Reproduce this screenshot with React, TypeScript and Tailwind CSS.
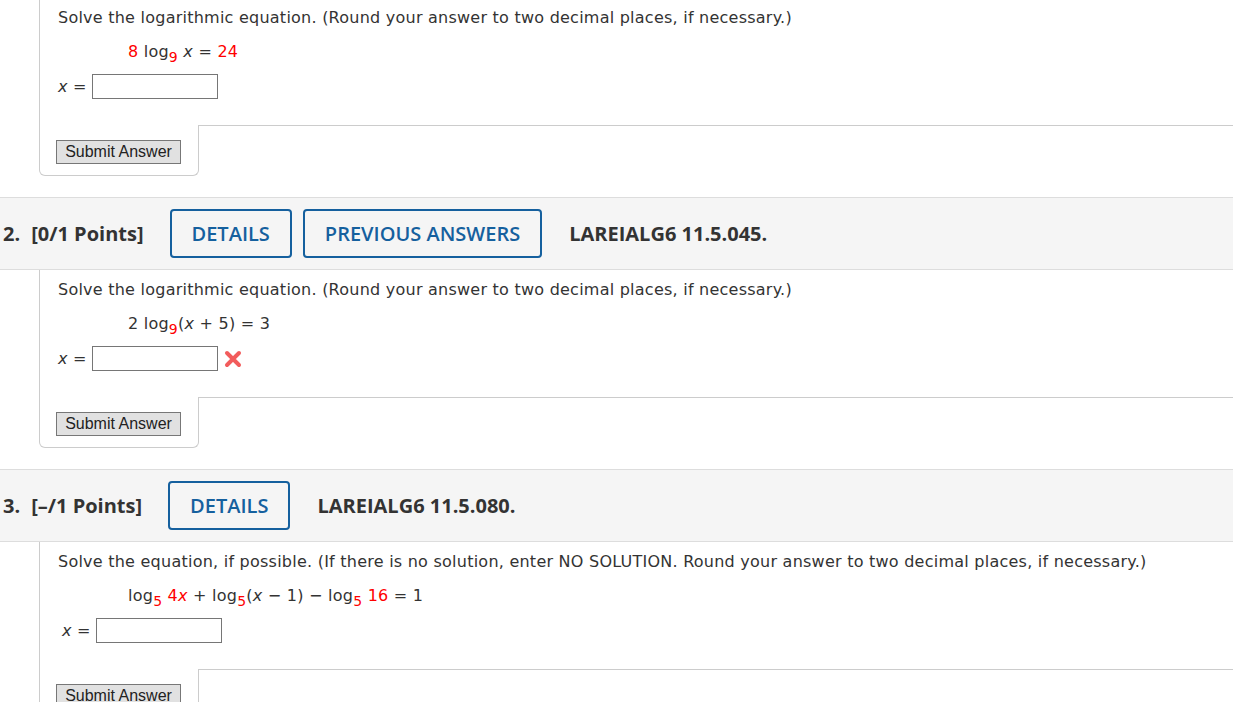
import type { ReactNode } from "react";

const RED = "text-[#f00]";

/** Red subscript base for log */
function Base({ n }: { n: string }) {
  return <span className={`${RED} align-[-5px] text-[14px] leading-none`}>{n}</span>;
}

function X() {
  return <span className="italic">x</span>;
}

function WrongMark() {
  return (
    <svg width="18" height="18" viewBox="0 0 18 18" className="ml-[6px]" aria-hidden="true">
      <path d="M3 3 L15 15 M15 3 L3 15" stroke="#f25c5c" strokeWidth="4" strokeLinecap="round" />
    </svg>
  );
}

function Equation({ children }: { children: ReactNode }) {
  return <p className="mt-[14px] h-[20px] pl-[70px]">{children}</p>;
}

function AnswerRow({ wrong, shifted }: { wrong?: boolean; shifted?: boolean }) {
  return (
    <div className={`mt-[12px] flex h-[25px] items-center ${shifted ? "pl-[4px]" : ""}`}>
      <span className="mr-[5px]">
        <X /> =
      </span>
      <input className="h-[25px] w-[126px] border border-[#767676] bg-white px-1 outline-none" />
      {wrong && <WrongMark />}
    </div>
  );
}

function Question({ first, children }: { first?: boolean; children: ReactNode }) {
  return (
    <div className="ml-[39px]">
      <div
        className={`border-l border-[#ccc] pl-[18px] ${first ? "pt-[8px]" : "pt-[10px]"} pb-[26px] font-['DejaVu_Sans',sans-serif] text-[16px] leading-[20px] tracking-[0.24px] whitespace-nowrap text-[#333]`}
      >
        {children}
      </div>
      <div className="flex">
        <div className="w-[160px] rounded-b-[6px] border-x border-b border-[#ccc] pt-[15px] pb-[11px] pl-[16px]">
          <button className="block h-[24px] w-[125px] border border-[#777] bg-[#e1e1e1] font-['Liberation_Sans',Arial,sans-serif] text-[16px] leading-none text-[#222]">
            Submit Answer
          </button>
        </div>
        <div className="flex-1 border-t border-[#ccc]" />
      </div>
    </div>
  );
}

function Header({ num, points, prev, code }: { num: number; points: string; prev?: boolean; code: string }) {
  const btn =
    "h-[49px] rounded-[4px] border-2 border-[#15609e] px-[20px] font-semibold text-[#15609e]";
  return (
    <div className="mt-[21px] flex h-[73px] items-center border-y border-[#ddd] bg-[#f5f5f5] pl-[3px] font-['Open_Sans',sans-serif] text-[20px] font-bold text-[#333]">
      <span>{num}.</span>
      <span className="ml-[11px]">[{points} Points]</span>
      <button className={`ml-[26px] ${btn}`}>DETAILS</button>
      {prev && <button className={`ml-[11px] ${btn}`}>PREVIOUS ANSWERS</button>}
      <span className="ml-[27px]">{code}</span>
    </div>
  );
}

export default function App() {
  return (
    <div className="h-[702px] w-[1233px] overflow-hidden bg-white">
      <Question first>
        <p>Solve the logarithmic equation. (Round your answer to two decimal places, if necessary.)</p>
        <Equation>
          <span className={RED}>8</span> log<Base n="9" /> <X /> = <span className={RED}>24</span>
        </Equation>
        <AnswerRow />
      </Question>

      <Header num={2} points="0/1" prev code="LAREIALG6 11.5.045." />

      <Question>
        <p>Solve the logarithmic equation. (Round your answer to two decimal places, if necessary.)</p>
        <Equation>
          2 log<Base n="9" />(<X /> + 5) = 3
        </Equation>
        <AnswerRow wrong />
      </Question>

      <Header num={3} points="–/1" code="LAREIALG6 11.5.080." />

      <Question>
        <p>
          Solve the equation, if possible. (If there is no solution, enter NO SOLUTION. Round your answer to two
          decimal places, if necessary.)
        </p>
        <Equation>
          log<Base n="5" /> <span className={RED}>4<span className="italic">x</span></span> + log<Base n="5" />(<X /> − 1) − log
          <Base n="5" /> <span className={RED}>16</span> = 1
        </Equation>
        <AnswerRow shifted />
      </Question>
    </div>
  );
}
